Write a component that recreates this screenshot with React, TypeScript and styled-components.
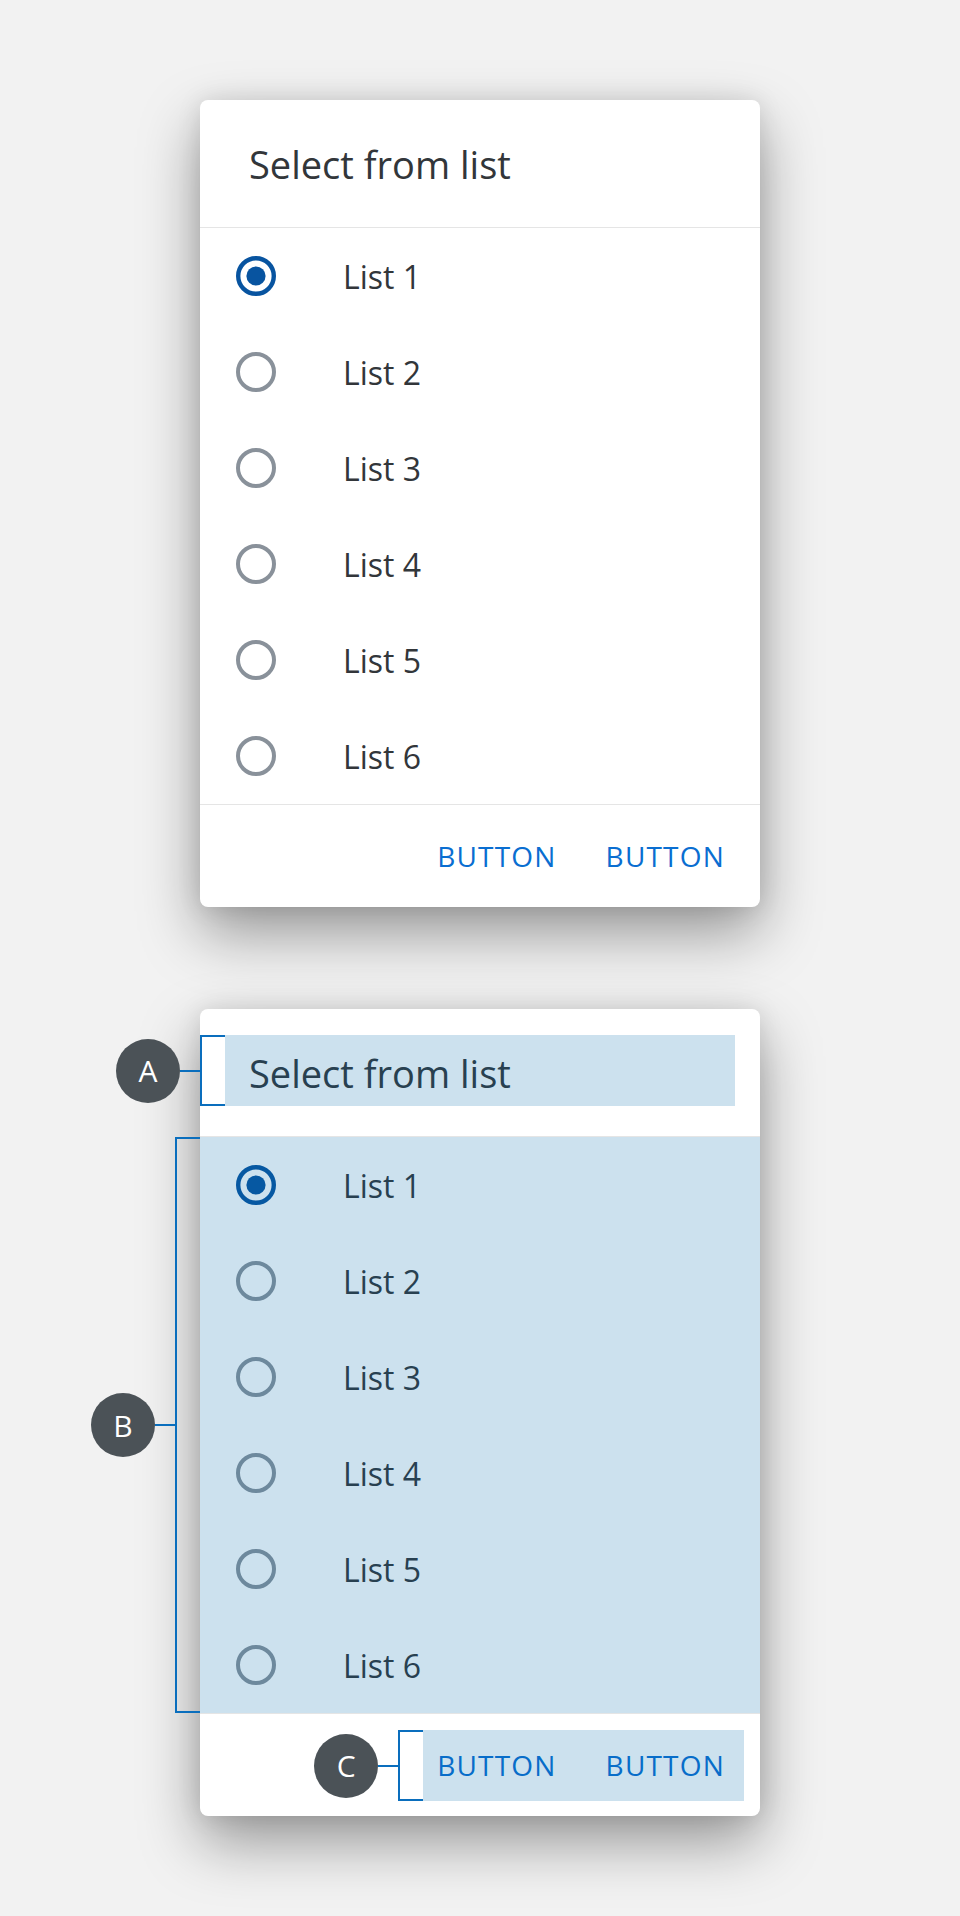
import { useState } from "react";
import styled, { createGlobalStyle, css } from "styled-components";

const BLUE = "#0a6ed1";
const LINE = "#0a6ebd";

const GlobalStyle = createGlobalStyle`
  body {
    margin: 0;
    background: #f2f2f2;
    font-family: "Open Sans", "Noto Sans", sans-serif;
  }
`;

// tint used on the annotated copy of the dialog
const tint = css`
  &::after {
    content: "";
    position: absolute;
    inset: 0;
    background: rgba(0, 106, 170, 0.2);
    pointer-events: none;
  }
`;

const OPTIONS = ["List 1", "List 2", "List 3", "List 4", "List 5", "List 6"];

interface RadioProps {
  selected: boolean;
}

function Radio({ selected }: RadioProps) {
  return (
    <RadioIcon viewBox="0 0 40 40" aria-hidden="true">
      <circle
        cx="20"
        cy="20"
        r={selected ? 17.8 : 18}
        fill="none"
        stroke={selected ? "#0854a0" : "#89919a"}
        strokeWidth={selected ? 4.4 : 4}
      />
      {selected && <circle cx="20" cy="20" r="9.6" fill="#0854a0" />}
    </RadioIcon>
  );
}

function Callout({ label }: { label: string }) {
  return (
    <CalloutWrap>
      <Badge>{label}</Badge>
      <Leader />
      <Bracket />
    </CalloutWrap>
  );
}

function Dialog({ annotated }: { annotated?: boolean }) {
  const [selected, setSelected] = useState(0);

  return (
    <Card>
      <Header>
        <Title $marked={annotated}>
          Select from list
          {annotated && <Callout label="A" />}
        </Title>
      </Header>

      <OptionList $marked={annotated}>
        {OPTIONS.map((option, i) => (
          <Option key={option} onClick={() => setSelected(i)}>
            <Radio selected={selected === i} />
            <span>{option}</span>
          </Option>
        ))}
        {annotated && <Callout label="B" />}
      </OptionList>

      <Footer>
        <Actions $marked={annotated}>
          <ActionButton>Button</ActionButton>
          <ActionButton>Button</ActionButton>
          {annotated && <Callout label="C" />}
        </Actions>
      </Footer>
    </Card>
  );
}

export default function App() {
  return (
    <>
      <GlobalStyle />
      <Page>
        <Dialog />
        <Dialog annotated />
      </Page>
    </>
  );
}

const Page = styled.main`
  box-sizing: border-box;
  min-height: 1916px;
  padding: 100px 0 102px;
  display: flex;
  flex-direction: column;
  align-items: center;
  gap: 102px;
`;

const Card = styled.section`
  width: 560px;
  background: #fff;
  border-radius: 8px;
  box-shadow: 0 26px 60px rgba(0, 0, 0, 0.38), 0 0 24px rgba(0, 0, 0, 0.1);
`;

// header styles
const Header = styled.header`
  padding: 26px 25px 30px;
  border-bottom: 1px solid #e5e5e5;
`;

const Title = styled.h2<{ $marked?: boolean }>`
  position: relative;
  box-sizing: border-box;
  height: 71px;
  margin: 0;
  padding: 5px 0 0 24px;
  display: flex;
  align-items: center;
  font-size: 38px;
  font-weight: 400;
  color: #32363a;
  ${(props) => props.$marked && tint}
`;

// list styles
const OptionList = styled.ul<{ $marked?: boolean }>`
  position: relative;
  margin: 0;
  padding: 0;
  list-style: none;
  ${(props) => props.$marked && tint}
`;

const Option = styled.li`
  height: 96px;
  padding-left: 36px;
  display: flex;
  align-items: center;
  gap: 67px;
  font-size: 32px;
  color: #32363a;
  cursor: pointer;
`;

const RadioIcon = styled.svg`
  width: 40px;
  height: 40px;
  flex-shrink: 0;
`;

// footer styles
const Footer = styled.footer`
  padding: 16px 16px 15px;
  border-top: 1px solid #e5e5e5;
  display: flex;
  justify-content: flex-end;
`;

const Actions = styled.div<{ $marked?: boolean }>`
  position: relative;
  height: 71px;
  padding: 0 5px 2px 0;
  box-sizing: border-box;
  display: flex;
  align-items: center;
  gap: 21px;
  ${(props) => props.$marked && tint}
`;

const ActionButton = styled.button`
  padding: 0 14px;
  border: 0;
  background: transparent;
  font-family: "Open Sans", "Noto Sans", sans-serif;
  font-size: 28px;
  letter-spacing: 1.2px;
  text-transform: uppercase;
  color: ${BLUE};
  cursor: pointer;
`;

// annotation callouts
const CalloutWrap = styled.div`
  position: absolute;
  top: 0;
  bottom: 0;
  right: 100%;
  display: flex;
  align-items: center;
`;

const Badge = styled.span`
  width: 64px;
  height: 64px;
  border-radius: 50%;
  background: #4b5257;
  color: #fff;
  font-size: 30px;
  display: flex;
  align-items: center;
  justify-content: center;
`;

const Leader = styled.span`
  width: 20px;
  height: 2px;
  background: ${LINE};
`;

const Bracket = styled.span`
  box-sizing: border-box;
  align-self: stretch;
  width: 25px;
  border: 2px solid ${LINE};
  border-right: none;
`;
